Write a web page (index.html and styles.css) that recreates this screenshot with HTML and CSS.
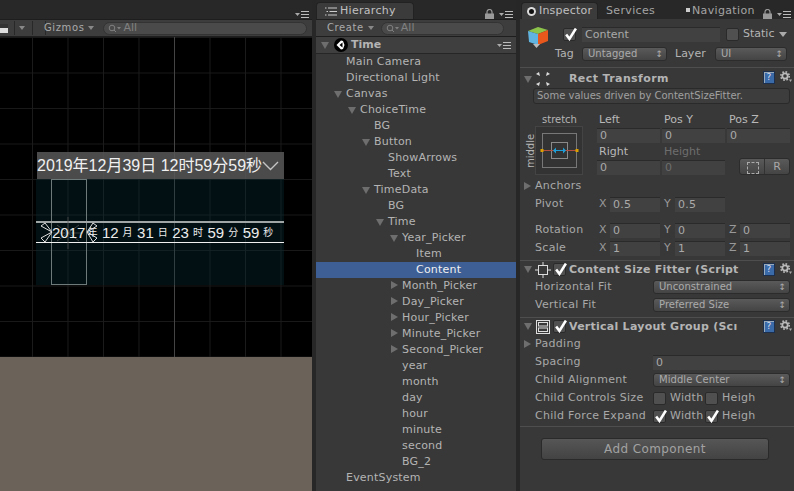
FILE: index.html
```html
<!DOCTYPE html>
<html lang="en">
  <head>
    <meta charset="utf-8" />
    <title>Unity Editor</title>
    <link rel="stylesheet" href="styles.css">
  </head>
  <body>
    <svg class="defs" width="0" height="0">
      <symbol id="check" viewBox="0 0 12 12"><path d="M2 6 L5 10 L11 .5" fill="none" stroke="#fff" stroke-width="2.4"/></symbol>
      <symbol id="gear" viewBox="0 0 12 12"><circle cx="5" cy="5" r="2.7" fill="none" stroke="#bbb" stroke-width="1.8"/><circle cx="5" cy="5" r="4.200" fill="none" stroke="#bbb" stroke-width="1.6" stroke-dasharray="1.700 1.600"/><path d="M9 8.500h3L10.500 11z" fill="#aaa"/></symbol>
      <symbol id="menu" viewBox="0 0 14 7"><path d="M0 2h5L2.500 5z" fill="#aaa"/><path d="M6 .5h8M6 3.500h8M6 6.500h8" stroke="#bbb"/></symbol>
      <symbol id="lock" viewBox="0 0 9 10"><path d="M2 5V3a2.500 2.500 0 0 1 5 0v2" fill="none" stroke="#999" stroke-width="1.200"/><rect y="4.500" width="9" height="5.500" fill="#999"/></symbol>
      <symbol id="lens" viewBox="0 0 14 9"><circle cx="4" cy="4" r="2.800" fill="none" stroke="#808080"/><path d="M6 6l2 2" stroke="#808080"/><path d="M9 3h4l-2 2.500z" fill="#808080"/></symbol>
    </svg>

    <section class="panel scene-panel">
      <div class="tabbar">
        <svg class="tab-menu"><use href="#menu"/></svg>
      </div>
      <div class="toolbar scene-tools">
        <span class="thumb"></span>
        <span class="tool-sep"></span>
        <span class="tool-drop"></span>
        <span class="tool-sep wide"></span>
        <span class="gizmos">Gizmos</span>
        <span class="tool-drop"></span>
        <div class="search scene-search"><svg class="lens"><use href="#lens"/></svg>All</div>
      </div>
      <div class="viewport">
        <div class="grid-axis"></div>
        <div class="widget">
          <div class="widget-head">
            <span class="head-text">2019年12月39日 12时59分59秒</span>
            <svg class="chevron" viewBox="0 0 17 10"><path d="M1 1l7.500 7.500L16 1" fill="none" stroke="#c4c4c4" stroke-width="1.400"/></svg>
          </div>
          <div class="widget-body">
            <div class="picker-frame"></div>
            <div class="band top"></div>
            <div class="band bottom"></div>
            <svg class="wire" viewBox="0 0 70 24">
              <path d="M31 -5v32M20 3l22 16M20 19L42 3M16 11h30" fill="none" stroke="#555" stroke-width=".700"/>
              <path d="M4 4L8 1l7 9zM4 16l4 4 7-10zM60 4L56 1l-6 9zM60 16l-4 4-6-10z" fill="none" stroke="#ddd"/>
            </svg>
            <div class="date-row">
              <b class="year">2017</b><i class="y-unit">年</i><b>12</b><i>月</i><b>31</b><i>日</i><b>23</b><i>时</i><b>59</b><i>分</i><b>59</b><i>秒</i>
            </div>
          </div>
        </div>
      </div>
      <div class="ground"></div>
    </section>

    <section class="panel hier-panel">
      <div class="tabbar">
        <div class="tab hier-tab">
          <svg class="list-icon" viewBox="0 0 12 9"><path d="M3 1h9M4.500 4.500h7.500M3 8h9" stroke="#ccc"/><path d="M0 1h1.500M1.500 4.500h1.500M0 8h1.500" stroke="#ccc"/></svg>
          Hierarchy
        </div>
        <svg class="tab-lock"><use href="#lock"/></svg>
        <svg class="tab-menu"><use href="#menu"/></svg>
      </div>
      <div class="toolbar hier-tools">
        <span class="create">Create</span>
        <span class="tool-drop"></span>
        <div class="search hier-search"><svg class="lens"><use href="#lens"/></svg>All</div>
      </div>
      <div class="scene-row">
        <span class="arrow open"></span>
        <svg class="unity" viewBox="0 0 14 14"><circle cx="7" cy="7" r="7" fill="#000"/><path d="M2.500 7 L7 2.500l2 .5 1.500 4-1.500 4-2 .5z" fill="#fff"/><path d="M5.500 7L8.500 4.500v5z" fill="#000"/></svg>
        <b>Time</b>
        <svg class="row-menu"><use href="#menu"/></svg>
      </div>
      <ul class="tree">
        <li class="d1">Main Camera</li>
        <li class="d1">Directional Light</li>
        <li class="d1 open">Canvas</li>
        <li class="d2 open">ChoiceTime</li>
        <li class="d3">BG</li>
        <li class="d3 open">Button</li>
        <li class="d4">ShowArrows</li>
        <li class="d4">Text</li>
        <li class="d3 open">TimeData</li>
        <li class="d4">BG</li>
        <li class="d4 open">Time</li>
        <li class="d5 open">Year_Picker</li>
        <li class="d6">Item</li>
        <li class="d6 selected">Content</li>
        <li class="d5 shut">Month_Picker</li>
        <li class="d5 shut">Day_Picker</li>
        <li class="d5 shut">Hour_Picker</li>
        <li class="d5 shut">Minute_Picker</li>
        <li class="d5 shut">Second_Picker</li>
        <li class="d5">year</li>
        <li class="d5">month</li>
        <li class="d5">day</li>
        <li class="d5">hour</li>
        <li class="d5">minute</li>
        <li class="d5">second</li>
        <li class="d5">BG_2</li>
        <li class="d1">EventSystem</li>
      </ul>
    </section>

    <section class="panel insp-panel">
      <div class="tabbar insp-tabs">
        <div class="tab insp-tab"><span class="info-dot"></span>Inspector</div>
        <span class="tab-text services">Services</span>
        <span class="tab-text nav"><i></i>Navigation</span>
        <svg class="tab-lock"><use href="#lock"/></svg>
        <svg class="tab-menu"><use href="#menu"/></svg>
      </div>

      <div class="obj-head">
        <svg class="cube" viewBox="0 0 22 24">
          <path d="M1 5 L11 1 L21 4 L11 8z" fill="#8cc34a"/>
          <path d="M1 5 L11 8 V19 L2 16z" fill="#62b4e0"/>
          <path d="M11 8 L21 4 V15 L11 19z" fill="#e8571c"/>
          <path d="M6 18h7l-3.500 4z" fill="#bbb"/>
        </svg>
        <div class="obj-rows">
          <div class="obj-row">
            <span class="check on"><svg><use href="#check"/></svg></span>
            <div class="field name-field">Content</div>
            <span class="check static-check"></span>
            <span class="static">Static</span>
            <span class="static-arrow"></span>
          </div>
          <div class="obj-row tag-row">
            <span class="tag-label">Tag</span>
            <div class="popup tag-pop">Untagged</div>
            <span class="layer-label">Layer</span>
            <div class="popup layer-pop">UI</div>
          </div>
        </div>
      </div>

      <div class="comp-head first">
        <span class="arrow open"></span>
        <svg class="comp-icon" viewBox="0 0 16 16"><path d="M1 3l3-2 1 4zM15 3l-3-2-1 4zM1 13l3 2 1-4zM15 13l-3 2-1-4z" fill="#ddd"/></svg>
        <b class="rect-title">Rect Transform</b>
        <span class="book">?</span>
        <svg class="gear"><use href="#gear"/></svg>
      </div>
      <div class="helpbox">Some values driven by ContentSizeFitter.</div>

      <div class="rect-top">
        <div class="anchor">
          <span class="anchor-x">stretch</span>
          <div class="anchor-body">
            <span class="anchor-y">middle</span>
            <svg class="anchor-box" viewBox="0 0 48 49">
              <rect x=".5" y=".5" width="47" height="48" fill="#333" stroke="#444"/>
              <rect x="7.500" y="7.500" width="34" height="34" fill="none" stroke="#777"/>
              <rect x="16.500" y="16.500" width="16" height="16" fill="none" stroke="#8a8a8a"/>
              <path d="M7 24.500h35" stroke="#b5503f"/>
              <path d="M19 24.500h11" stroke="#1e9fd8"/>
              <path d="M18 24.500l3-3v6zM31 24.500l-3-3v6z" fill="#1e9fd8"/>
              <rect x="5.500" y="23" width="3" height="3" fill="#d9a000"/>
              <rect x="40.500" y="23" width="3" height="3" fill="#d9a000"/>
            </svg>
          </div>
        </div>
        <div class="rect-grid">
          <label>Left</label><label>Pos Y</label><label>Pos Z</label>
          <div class="field">0</div><div class="field">0</div><div class="field">0</div>
          <label>Right</label><label class="dim">Height</label><span></span>
          <div class="field">0</div><div class="field dim">0</div>
          <div class="btn-pair"><span class="blueprint"></span><span class="raw">R</span></div>
        </div>
      </div>

      <div class="prop fold"><span class="arrow shut"></span>Anchors</div>
      <div class="prop pivot-row">
        <span class="prop-label short">Pivot</span>
        <div class="vec">
          <div class="cell"><i>X</i><div class="field">0.5</div></div>
          <div class="cell"><i>Y</i><div class="field">0.5</div></div>
        </div>
      </div>
      <div class="prop rot-row">
        <span class="prop-label short">Rotation</span>
        <div class="vec">
          <div class="cell"><i>X</i><div class="field">0</div></div>
          <div class="cell"><i>Y</i><div class="field">0</div></div>
          <div class="cell"><i>Z</i><div class="field">0</div></div>
        </div>
      </div>
      <div class="prop">
        <span class="prop-label short">Scale</span>
        <div class="vec">
          <div class="cell"><i>X</i><div class="field">1</div></div>
          <div class="cell"><i>Y</i><div class="field">1</div></div>
          <div class="cell"><i>Z</i><div class="field">1</div></div>
        </div>
      </div>

      <div class="comp-head sep fitter">
        <span class="arrow open"></span>
        <svg class="comp-icon" viewBox="0 0 16 16"><rect x="3.500" y="3.500" width="9" height="9" fill="none" stroke="#ddd"/><path d="M8 0v3M8 13v3M0 8h3M13 8h3" stroke="#ddd"/></svg>
        <span class="check on"><svg><use href="#check"/></svg></span>
        <b class="comp-title">Content Size Fitter (Script</b>
        <span class="book">?</span>
        <svg class="gear"><use href="#gear"/></svg>
      </div>
      <div class="prop"><span class="prop-label">Horizontal Fit</span><div class="popup wide-pop">Unconstrained</div></div>
      <div class="prop"><span class="prop-label">Vertical Fit</span><div class="popup wide-pop">Preferred Size</div></div>

      <div class="comp-head sep layout">
        <span class="arrow open"></span>
        <svg class="comp-icon" viewBox="0 0 16 16"><rect x="1.500" y="1.500" width="13" height="13" fill="none" stroke="#ddd"/><rect x="3.500" y="3.500" width="9" height="3.500" fill="none" stroke="#ddd"/><rect x="3.500" y="9" width="9" height="3.500" fill="none" stroke="#ddd"/></svg>
        <span class="check on"><svg><use href="#check"/></svg></span>
        <b class="comp-title">Vertical Layout Group (Sc&#305;</b>
        <span class="book">?</span>
        <svg class="gear"><use href="#gear"/></svg>
      </div>
      <div class="prop fold"><span class="arrow shut"></span>Padding</div>
      <div class="prop"><span class="prop-label">Spacing</span><div class="field wide-field">0</div></div>
      <div class="prop"><span class="prop-label">Child Alignment</span><div class="popup wide-pop">Middle Center</div></div>
      <div class="prop">
        <span class="prop-label">Child Controls Size</span>
        <span class="check"></span><span class="check-text">Width</span>
        <span class="check"></span><span class="check-text">Heigh</span>
      </div>
      <div class="prop">
        <span class="prop-label">Child Force Expand</span>
        <span class="check on"><svg><use href="#check"/></svg></span><span class="check-text">Width</span>
        <span class="check on"><svg><use href="#check"/></svg></span><span class="check-text">Heigh</span>
      </div>
      <div class="add-wrap"><div class="add-btn">Add Component</div></div>
    </section>
  </body>
</html>
```

FILE: styles.css
```css
* {
  box-sizing: border-box;
}
body {
  margin: 0;
  width: 794px;
  height: 491px;
  overflow: hidden;
  display: flex;
  gap: 4px;
  background: #272727;
  color: #b4b4b4;
  font: 11px/16px "DejaVu Sans", sans-serif;
}
.defs {
  position: absolute;
}
.panel {
  height: 491px;
  display: flex;
  flex-direction: column;
  flex: none;
}

/* shared bars */
.tabbar {
  position: relative;
  height: 19px;
  flex: none;
  background: #282828;
}
.tab {
  position: absolute;
  left: 0;
  top: 2px;
  height: 17px;
  background: #3b3b3b;
  border: 1px solid #222;
  border-bottom: 0;
  border-radius: 4px 4px 0 0;
  color: #c0c0c0;
  display: flex;
  align-items: center;
}
.tab-menu {
  position: absolute;
  right: 3px;
  top: 11px;
  width: 14px;
  height: 7px;
}
.tab-lock {
  position: absolute;
  right: 22px;
  top: 9px;
  width: 9px;
  height: 10px;
}
.toolbar {
  height: 18px;
  flex: none;
  display: flex;
  align-items: center;
  background: #3d3d3d;
  border-top: 1px solid #1e1e1e;
  border-bottom: 1px solid #1e1e1e;
}
.tool-drop {
  width: 0;
  height: 0;
  margin-left: 4px;
  border: 3px solid transparent;
  border-top: 4px solid #888;
  border-bottom: 0;
}
.tool-sep {
  width: 1px;
  height: 14px;
  margin-left: 6px;
  background: #282828;
}
.search {
  height: 13px;
  border-radius: 7px;
  background: #4a4a4a;
  border: 1px solid #333;
  color: #808080;
  display: flex;
  align-items: center;
  font-size: 11px;
}
.lens {
  width: 14px;
  height: 9px;
  margin: 0 1px 0 4px;
}

/* scene view */
.scene-panel {
  width: 312px;
}
.thumb {
  width: 8px;
  height: 9px;
  background: linear-gradient(#333 45%, #ddd 45%);
}
.tool-sep.wide {
  margin-left: 7px;
  width: 1px;
  box-shadow: 13px 0 #282828;
}
.gizmos {
  margin-left: 11px;
  font-size: 10px;
  letter-spacing: .6px;
  color: #aaa;
}
.scene-search {
  margin-left: 9px;
  width: 204px;
}
.viewport {
  position: relative;
  height: 320px;
  flex: none;
  background-color: #000;
  background-image:
    linear-gradient(90deg, #1b1b1b 1px, transparent 1px),
    linear-gradient(#191919 1px, transparent 1px);
  background-size: 35.5px 35.5px;
  background-position: -3.5px 0;
}
.grid-axis {
  position: absolute;
  left: 174px;
  top: 0;
  bottom: 0;
  width: 1px;
  background: #444;
}
.ground {
  flex: 1;
  background: #6b6259;
}
.widget {
  position: absolute;
  left: 36px;
  top: 115px;
  width: 248px;
}
.widget-head {
  height: 27px;
  margin-left: 1px;
  background: rgba(88, 88, 88, .85);
  display: flex;
  align-items: center;
  justify-content: space-between;
  padding-right: 9px;
  color: #f0f0f0;
  font: 16px/20px "Liberation Sans", "Noto Sans CJK SC", sans-serif;
}
.head-text {
  white-space: nowrap;
}
.chevron {
  width: 17px;
  height: 10px;
  flex: none;
}
.widget-body {
  position: relative;
  height: 106px;
  background: rgba(8, 50, 60, .32);
}
.picker-frame {
  position: absolute;
  left: 15px;
  top: 0;
  width: 36px;
  height: 106px;
  border: 1px solid #6e7a7a;
}
.band {
  position: absolute;
  left: 0;
  right: 0;
}
.band.top {
  top: 42px;
  height: 2px;
  background: #a0a5a5;
}
.band.bottom {
  top: 63px;
  height: 1px;
  background: #f0f0f0;
}
.wire {
  position: absolute;
  left: 1px;
  top: 43px;
  width: 70px;
  height: 24px;
  overflow: visible;
}
.date-row {
  position: absolute;
  left: 16px;
  top: 43px;
  height: 21px;
  display: flex;
  align-items: center;
  color: #ececec;
  font-family: "Liberation Sans", "Noto Sans CJK SC", sans-serif;
}
.date-row b {
  font-weight: 400;
  font-size: 15px;
  margin-left: 4.5px;
}
.date-row i {
  font-style: normal;
  font-size: 10px;
  margin-left: 4px;
}
.date-row b.year {
  margin-left: 0;
}
.date-row i.y-unit {
  margin-left: 2px;
}

/* hierarchy */
.hier-panel {
  width: 200px;
  background: #383838;
}
.hier-tab {
  width: 98px;
  padding-left: 8px;
  letter-spacing: .3px;
}
.list-icon {
  width: 12px;
  height: 9px;
  margin-right: 3px;
}
.hier-tools {
  padding-left: 11px;
}
.create {
  font-size: 10px;
  letter-spacing: .6px;
  color: #aaa;
}
.hier-search {
  margin-left: 7px;
  width: 123px;
}
.scene-row {
  height: 17px;
  position: relative;
  display: flex;
  align-items: center;
  background: #3f3f3f;
  border-bottom: 1px solid #262626;
  padding-left: 5px;
  font-weight: 700;
}
.unity {
  width: 14px;
  height: 14px;
  margin: 0 3px 0 5px;
}
.row-menu {
  position: absolute;
  right: 5px;
  top: 5px;
  width: 14px;
  height: 7px;
}
.arrow {
  flex: none;
  width: 0;
  height: 0;
  border-style: solid;
  border-color: transparent;
}
.arrow.open {
  border-width: 7px 4.5px 0;
  border-top-color: #6e6e6e;
}
.arrow.shut {
  border-width: 4.5px 0 4.5px 7px;
  border-left-color: #6e6e6e;
}
.tree {
  list-style: none;
  margin: 0;
  padding: 0;
}
.tree li {
  position: relative;
  height: 16px;
  line-height: 16px;
  letter-spacing: .2px;
}
.tree li.open::before,
.tree li.shut::before {
  content: "";
  position: absolute;
  margin-left: -12px;
  width: 0;
  height: 0;
  border-style: solid;
  border-color: transparent;
}
.tree li.open::before {
  top: 5px;
  border-width: 7px 4.5px 0;
  border-top-color: #6e6e6e;
}
.tree li.shut::before {
  top: 3px;
  margin-left: -11px;
  border-width: 4.5px 0 4.5px 7px;
  border-left-color: #6e6e6e;
}
.d1 { padding-left: 30px; }
.d2 { padding-left: 44px; }
.d3 { padding-left: 58px; }
.d4 { padding-left: 72px; }
.d5 { padding-left: 86px; }
.d6 { padding-left: 100px; }
.tree li.selected {
  background: #3e5f96;
  color: #f0f0f0;
}

/* inspector */
.insp-panel {
  width: 274px;
  background: #383838;
}
.insp-tabs {
  background: #282828;
}
.insp-tab {
  left: 1px;
  width: 77px;
  padding-left: 5px;
  letter-spacing: .2px;
}
.info-dot {
  width: 9px;
  height: 9px;
  border-radius: 50%;
  margin-right: 3px;
  background: #111;
  box-shadow: inset 0 0 0 2px #ddd;
}
.tab-text {
  position: absolute;
  top: 3px;
  letter-spacing: .35px;
  color: #a4a4a4;
}
.services {
  left: 86px;
}
.nav {
  left: 166px;
}
.nav i {
  display: inline-block;
  width: 4px;
  height: 4px;
  margin-right: 2px;
  vertical-align: 2px;
  background: #ccc;
}
.obj-head {
  height: 49px;
  flex: none;
  display: flex;
  border-bottom: 1px solid #4e4e4e;
  padding: 7px 0 0 7px;
}
.cube {
  width: 22px;
  height: 24px;
  flex: none;
}
.obj-rows {
  margin-left: 14px;
}
.obj-row {
  height: 16px;
  display: flex;
  align-items: center;
}
.check {
  flex: none;
  width: 13px;
  height: 13px;
  border-radius: 2px;
  background: #505050;
  border: 1px solid #2a2a2a;
  position: relative;
}
.check svg {
  position: absolute;
  left: 0;
  top: -1px;
  width: 13px;
  height: 13px;
}
.name-field {
  width: 138px;
  margin-left: 6px;
  color: #a0a0a0;
}
.static-check {
  margin-left: 6px;
}
.static {
  margin-left: 4px;
}
.static-arrow {
  margin-left: 5px;
  border: 4px solid transparent;
  border-top: 5px solid #aaa;
  border-bottom: 0;
}
.tag-row {
  margin: 4px 0 0 -8px;
}
.tag-label {
  width: 27px;
}
.tag-pop {
  width: 85px;
}
.layer-label {
  margin-left: 8px;
  width: 40px;
}
.layer-pop {
  width: 72px;
}
.field {
  height: 15px;
  line-height: 14px;
  padding-left: 3px;
  background: #414141;
  border-top: 1px solid #2a2a2a;
  font-size: 11px;
  color: #aaa;
}
.field.dim {
  color: #6e6e6e;
}
.popup {
  position: relative;
  height: 14px;
  line-height: 12px;
  padding-left: 5px;
  border-radius: 3px;
  border: 1px solid #2c2c2c;
  background: linear-gradient(#5a5a5a, #444);
  font-size: 10px;
  letter-spacing: .05px;
  color: #ababab;
}
.popup::after {
  content: "\2195";
  position: absolute;
  right: 3px;
  top: 0;
  font-size: 9px;
}
.comp-head {
  position: relative;
  flex: none;
  height: 18px;
  display: flex;
  align-items: center;
  padding-left: 4px;
}
.comp-head.first {
  height: 22px;
}
.comp-head.sep {
  border-top: 1px solid #4e4e4e;
}
.comp-head.layout {
  margin-top: 3px;
}
.comp-icon {
  width: 16px;
  height: 16px;
  margin-left: 3px;
  flex: none;
}
.comp-head .check {
  margin-left: 2px;
}
.rect-title {
  margin-left: 18px;
  letter-spacing: .4px;
}
.comp-title {
  margin-left: 3px;
  width: 170px;
  overflow: hidden;
  white-space: nowrap;
  letter-spacing: .25px;
}
.book {
  position: absolute;
  left: 243px;
  top: 2px;
  width: 12px;
  height: 13px;
  background: #3a6aa8;
  border: 1px solid #1c2f4c;
  box-shadow: inset 1px 1px 0 #9ab;
  color: #dde;
  text-align: center;
  font-size: 9px;
  line-height: 11px;
}
.comp-head.first .book,
.comp-head.first .gear {
  top: 3px;
}
.gear {
  position: absolute;
  left: 260px;
  top: 2px;
  width: 12px;
  height: 12px;
}
.helpbox {
  flex: none;
  height: 16px;
  margin: -2px 4px 0 13px;
  padding-left: 3px;
  border: 1px solid #2a2a2a;
  border-radius: 3px;
  background: #3d3d3d;
  line-height: 14px;
  font-size: 10px;
  color: #a0a0a0;
}
.rect-top {
  flex: none;
  height: 73px;
  display: flex;
  padding-top: 8px;
}
.anchor {
  width: 77px;
  padding: 1px 0 0 6px;
}
.anchor-x {
  display: block;
  padding-left: 16px;
  font-size: 10px;
  line-height: 13px;
}
.anchor-body {
  display: flex;
}
.anchor-y {
  writing-mode: vertical-rl;
  transform: rotate(180deg);
  width: 9px;
  text-align: center;
  font-size: 10px;
  line-height: 9px;
}
.anchor-box {
  width: 48px;
  height: 49px;
}
.rect-grid {
  display: grid;
  grid-template-columns: 63px 63px 63px;
  grid-auto-rows: 16px;
  column-gap: 2px;
}
.rect-grid label {
  color: #b8b8b8;
  padding-left: 2px;
}
.rect-grid label.dim {
  color: #6e6e6e;
}
.btn-pair {
  display: flex;
  height: 17px;
  margin: -2px 0 0 12px;
  border: 1px solid #2c2c2c;
  border-radius: 3px;
  background: linear-gradient(#5a5a5a, #444);
}
.blueprint {
  width: 25px;
  border-right: 1px solid #333;
  position: relative;
}
.blueprint::after {
  content: "";
  position: absolute;
  left: 7px;
  top: 3px;
  width: 10px;
  height: 10px;
  border: 1px dashed #aaa;
}
.raw {
  flex: 1;
  text-align: center;
  line-height: 15px;
  color: #a8a8a8;
}
.prop {
  flex: none;
  height: 18px;
  display: flex;
  align-items: center;
  padding-left: 15px;
  letter-spacing: .3px;
  color: #a8a8a8;
}
.prop.fold {
  padding-left: 4px;
}
.prop.fold .arrow {
  margin-right: 4px;
}
.prop-label {
  width: 118px;
  flex: none;
}
.prop-label.short {
  width: 62px;
}
.pivot-row {
  margin-bottom: 8px;
}
.vec {
  display: grid;
  grid-template-columns: 63px 63px 63px;
  column-gap: 2px;
}
.cell {
  display: flex;
  align-items: center;
}
.cell i {
  width: 13px;
  padding-left: 2px;
  font-style: normal;
  color: #999;
}
.cell .field {
  flex: 1;
}
.rot-row + .prop {
  margin-bottom: 3px;
}
.wide-field {
  width: 137px;
}
.wide-pop {
  width: 137px;
}
.check-text {
  margin-left: 4px;
  width: 35px;
  flex: none;
}
.add-wrap {
  padding: 11px 0 0 21px;
  border-top: 1px solid #4e4e4e;
  margin-top: 1px;
}
.add-btn {
  width: 228px;
  height: 22px;
  border: 1px solid #2a2a2a;
  border-radius: 3px;
  background: linear-gradient(#565656, #434343);
  text-align: center;
  line-height: 20px;
  font-size: 12px;
  letter-spacing: .4px;
  color: #a2a2a2;
}
```
